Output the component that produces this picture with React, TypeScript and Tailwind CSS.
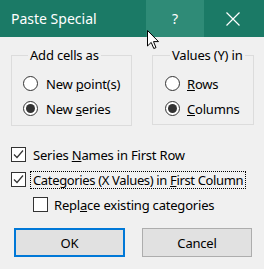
import React from "react";

function Radio({ checked }: { checked?: boolean }) {
  return (
    <span className="w-[15px] h-[15px] rounded-full border border-[#333] bg-white flex items-center justify-center shrink-0">
      {checked && <span className="w-[9px] h-[9px] rounded-full bg-[#333]" />}
    </span>
  );
}

function Check({ checked }: { checked?: boolean }) {
  return (
    <span className="w-[15px] h-[15px] border border-[#333] bg-white flex items-center justify-center shrink-0">
      {checked && (
        <svg width="11" height="11" viewBox="0 0 11 11" fill="none">
          <path d="M1 5.5 L4 8.5 L10 1.5" stroke="#333" strokeWidth="1.2" />
        </svg>
      )}
    </span>
  );
}

export default function App() {
  return (
    <div
      className="w-[264px] h-[269px] bg-[#f0f0f0] relative overflow-hidden text-black text-[13px] leading-[18px] tracking-[-0.2px] whitespace-nowrap"
      style={{ fontFamily: '"Noto Sans", "Open Sans", sans-serif' }}
    >
      {/* Title bar */}
      <div className="h-[37px] bg-[#1b7a66] flex text-white tracking-normal">
        <div className="flex-1 pl-[11px] flex items-center text-[14px]">Paste Special</div>
        <div className="w-[58px] bg-[#2f8b77] flex items-center justify-center text-[14px]">?</div>
        <div className="w-[60px] flex items-center justify-center pr-[3px]">
          <svg width="14" height="14" viewBox="0 0 14 14">
            <path d="M0.5 0.5 L13.5 13.5 M13.5 0.5 L0.5 13.5" stroke="white" strokeWidth="1.2" />
          </svg>
        </div>
      </div>

      {/* Group boxes */}
      <div className="flex pl-[11px] mt-[9px]">
        <fieldset className="w-[121px] h-[80px] border border-[#dcdcdc] pl-[11px] pt-[7px]">
          <legend className="ml-[5px] px-[2px]">Add cells as</legend>
          <div className="h-[25px] flex items-center gap-[8px]">
            <Radio />
            <span>
              New <u>p</u>oint(s)
            </span>
          </div>
          <div className="h-[25px] flex items-center gap-[8px]">
            <Radio checked />
            <span>
              New <u>s</u>eries
            </span>
          </div>
        </fieldset>
        <fieldset className="ml-[20px] w-[102px] h-[79px] border border-[#dcdcdc] pl-[12px] pt-[7px]">
          <legend className="ml-[5px] px-[2px]">Values (Y) in</legend>
          <div className="h-[25px] flex items-center gap-[7px]">
            <Radio />
            <span>
              <u>R</u>ows
            </span>
          </div>
          <div className="h-[25px] flex items-center gap-[7px]">
            <Radio checked />
            <span>
              <u>C</u>olumns
            </span>
          </div>
        </fieldset>
      </div>

      {/* Checkboxes */}
      <div className="mt-[16px] pl-[11px]">
        <div className="h-[25px] flex items-center gap-[7px]">
          <Check checked />
          <span>
            Series <u>N</u>ames in First Row
          </span>
        </div>
        <div className="h-[25px] flex items-center gap-[5px]">
          <Check checked />
          <span className="px-[2px] outline outline-1 outline-dotted outline-black leading-[16px] tracking-[-0.35px]">
            Categories (X Values) in <u>F</u>irst Column
          </span>
        </div>
        <div className="h-[25px] flex items-center gap-[6px] pl-[22px]">
          <Check />
          <span>
            Repl<u>a</u>ce existing categories
          </span>
        </div>
      </div>

      {/* Buttons */}
      <div className="flex pl-[14px] mt-[11px] gap-[17px]">
        <button className="w-[111px] h-[29px] bg-[#e1e1e1] border-2 border-[#0078d7]">OK</button>
        <button className="w-[110px] h-[29px] bg-[#e1e1e1] border border-[#adadad]">Cancel</button>
      </div>

      {/* Mouse cursor */}
      <svg className="absolute left-[147px] top-[30px]" width="13" height="20" viewBox="0 0 13 20">
        <path d="M0.5 0.5 L0.5 16 L4.2 12.4 L6.8 18.5 L9 17.6 L6.5 11.6 L11.5 11.6 Z" fill="white" stroke="black" strokeWidth="1" />
      </svg>
    </div>
  );
}
